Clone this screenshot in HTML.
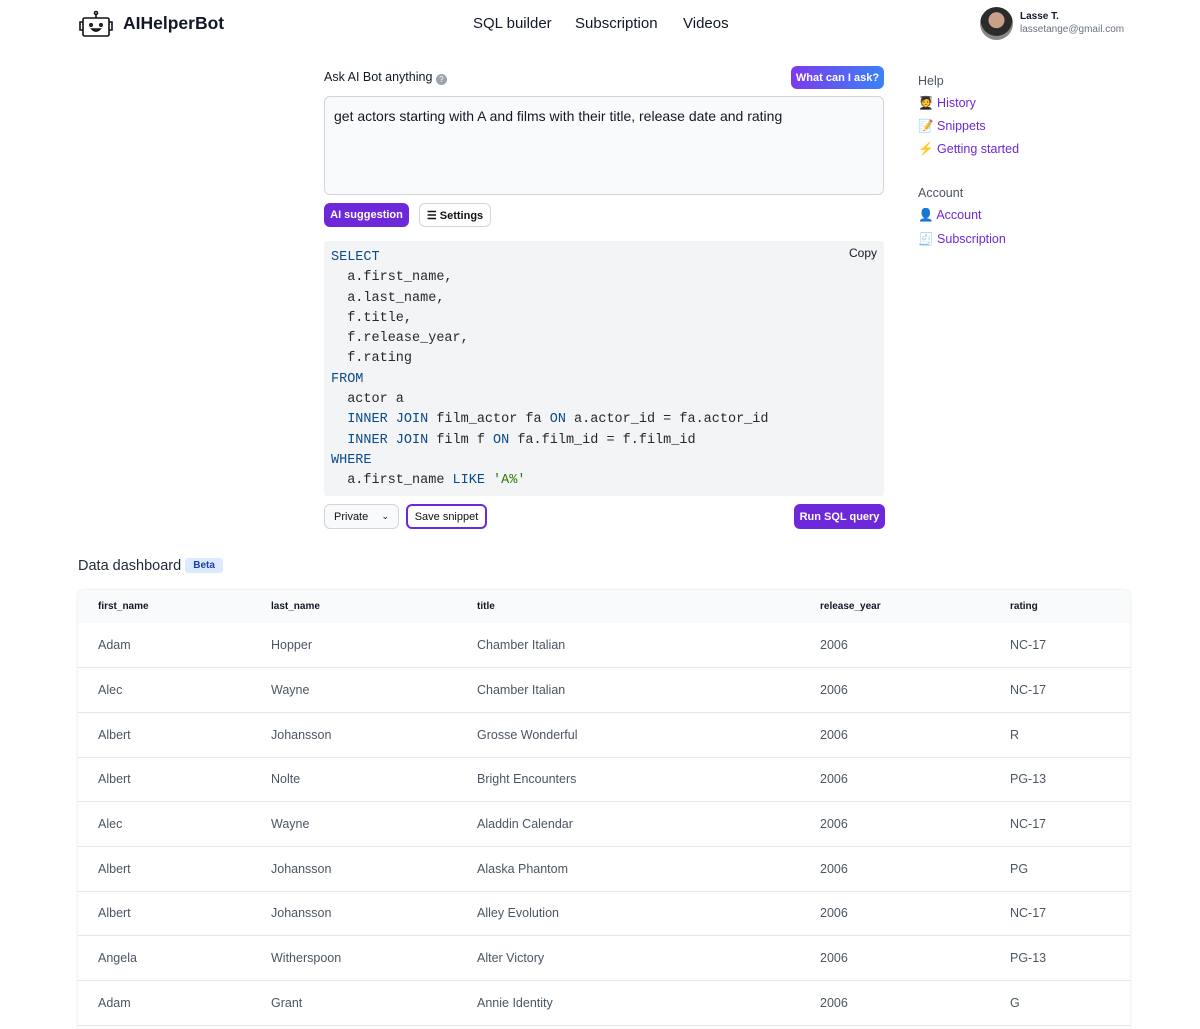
<!DOCTYPE html>
<html><head><meta charset="utf-8"><style>
*{box-sizing:border-box;margin:0;padding:0}
html,body{width:1200px;height:1029px;overflow:hidden}
body{background:#fff;font-family:"Liberation Sans",sans-serif;color:#111827;position:relative}
.a{position:absolute}
.nav{font-size:15px;color:#111827;top:15px}
.side{font-size:12.5px;color:#6d28d9}
.btn{position:absolute;border-radius:6px;font-size:11px;font-weight:bold;display:flex;align-items:center;justify-content:center}
pre{font-family:"Liberation Mono",monospace;font-size:13.5px;line-height:20.3px;color:#24292e}
.k{color:#0b4a8b}.s{color:#2a7a00}
table{border-collapse:collapse;width:1052px;font-size:12.5px}
td,th{text-align:left;padding-left:20px;height:44.7px;border-bottom:1px solid #e5e7eb;color:#4b5563}
th{height:33px;font-size:10px;color:#111827;background:#f9fafb;border:none}
</style></head><body>
<svg class="a" style="left:78px;top:10px" width="36" height="28" viewBox="0 0 36 28" fill="none" stroke="#111" stroke-width="1.6"><rect x="5" y="8" width="26" height="18" rx="1.5"/><path d="M5 12H2v8h3M31 12h3v8h-3M18 8V4"/><circle cx="18" cy="3" r="1.5"/><circle cx="13" cy="15" r="1.2"/><circle cx="23" cy="15" r="1.2"/><path d="M14 19q4 4 8 0z"/></svg>
<div class="a" style="left:123px;top:13px;font-size:17.5px;font-weight:bold">AIHelperBot</div>
<div class="a nav" style="left:473px">SQL builder</div>
<div class="a nav" style="left:575px">Subscription</div>
<div class="a nav" style="left:683px">Videos</div>
<div class="a" style="left:980px;top:7px;width:33px;height:33px;border-radius:50%;background:radial-gradient(circle at 50% 40%,#c9a08a 0 30%,#2b2b2b 32% 60%,#888 62%)"></div>
<div class="a" style="left:1020px;top:11px;font-size:10px;font-weight:bold">Lasse T.</div>
<div class="a" style="left:1020px;top:24px;font-size:10px;color:#6b7280">lassetange@gmail.com</div>

<div class="a" style="left:324px;top:70px;font-size:12.5px">Ask AI Bot anything <span style="display:inline-block;width:11px;height:11px;border-radius:50%;background:#9ca3af;color:#fff;font-size:8px;text-align:center;line-height:11px;vertical-align:-1px">?</span></div>
<div class="btn" style="left:791px;top:66px;width:93px;height:23px;background:linear-gradient(90deg,#7c3aed,#3b82f6);color:#fff">What can I ask?</div>
<div class="a" style="left:324px;top:96px;width:560px;height:99px;border:1px solid #d1d5db;border-radius:6px;background:#f9fafb;padding:11px 9px;font-size:14px">get actors starting with A and films with their title, release date and rating</div>
<div class="btn" style="left:324px;top:203px;width:85px;height:24px;background:#6d28d9;color:#fff">AI suggestion</div>
<div class="btn" style="left:419px;top:203px;width:72px;height:24px;border:1px solid #d1d5db;color:#111">☰ Settings</div>
<div class="a" style="left:324px;top:241px;width:560px;height:255px;background:#f3f4f6;border-radius:3px;padding:7px 7px">
<div class="a" style="right:7px;top:5px;font-size:12px">Copy</div>
<pre><span class="k">SELECT</span>
  a.first_name,
  a.last_name,
  f.title,
  f.release_year,
  f.rating
<span class="k">FROM</span>
  actor a
  <span class="k">INNER JOIN</span> film_actor fa <span class="k">ON</span> a.actor_id = fa.actor_id
  <span class="k">INNER JOIN</span> film f <span class="k">ON</span> fa.film_id = f.film_id
<span class="k">WHERE</span>
  a.first_name <span class="k">LIKE</span> <span class="s">'A%'</span></pre></div>
<div class="btn" style="left:324px;top:504px;width:75px;height:25px;border:1px solid #d1d5db;background:#f9fafb;color:#111;font-weight:normal;justify-content:space-between;padding:0 9px">Private <span style="font-size:9px">⌄</span></div>
<div class="btn" style="left:406px;top:504px;width:81px;height:25px;border:2px solid #6d28d9;color:#111;font-weight:normal">Save snippet</div>
<div class="btn" style="left:794px;top:504px;width:91px;height:25px;background:#6d28d9;color:#fff">Run SQL query</div>

<div class="a" style="left:918px;top:74px;font-size:12.5px;color:#4b5563">Help</div>
<div class="a side" style="left:918px;top:96px">🧑‍🎓 History</div>
<div class="a side" style="left:918px;top:119px">📝 Snippets</div>
<div class="a side" style="left:918px;top:142px">⚡ Getting started</div>
<div class="a" style="left:918px;top:186px;font-size:12.5px;color:#4b5563">Account</div>
<div class="a side" style="left:918px;top:208px">👤 Account</div>
<div class="a side" style="left:918px;top:232px">🧾 Subscription</div>

<div class="a" style="left:78px;top:558px;font-size:14.5px;color:#1f2937">Data dashboard <span style="font-size:10px;background:#dbeafe;color:#1e40af;padding:2px 8px;border-radius:3px;font-weight:bold;vertical-align:2px">Beta</span></div>
<div class="a" style="left:78px;top:590px;box-shadow:0 0 3px rgba(0,0,0,.12);border-radius:6px;overflow:hidden">
<table><tr><th style="width:173px">first_name</th><th style="width:206px">last_name</th><th style="width:343px">title</th><th style="width:190px">release_year</th><th>rating</th></tr>
<tr><td>Adam</td><td>Hopper</td><td>Chamber Italian</td><td>2006</td><td>NC-17</td></tr>
<tr><td>Alec</td><td>Wayne</td><td>Chamber Italian</td><td>2006</td><td>NC-17</td></tr>
<tr><td>Albert</td><td>Johansson</td><td>Grosse Wonderful</td><td>2006</td><td>R</td></tr>
<tr><td>Albert</td><td>Nolte</td><td>Bright Encounters</td><td>2006</td><td>PG-13</td></tr>
<tr><td>Alec</td><td>Wayne</td><td>Aladdin Calendar</td><td>2006</td><td>NC-17</td></tr>
<tr><td>Albert</td><td>Johansson</td><td>Alaska Phantom</td><td>2006</td><td>PG</td></tr>
<tr><td>Albert</td><td>Johansson</td><td>Alley Evolution</td><td>2006</td><td>NC-17</td></tr>
<tr><td>Angela</td><td>Witherspoon</td><td>Alter Victory</td><td>2006</td><td>PG-13</td></tr>
<tr><td>Adam</td><td>Grant</td><td>Annie Identity</td><td>2006</td><td>G</td></tr>
<tr><td>&nbsp;</td><td></td><td></td><td></td><td></td></tr>
</table></div>
</body></html>
